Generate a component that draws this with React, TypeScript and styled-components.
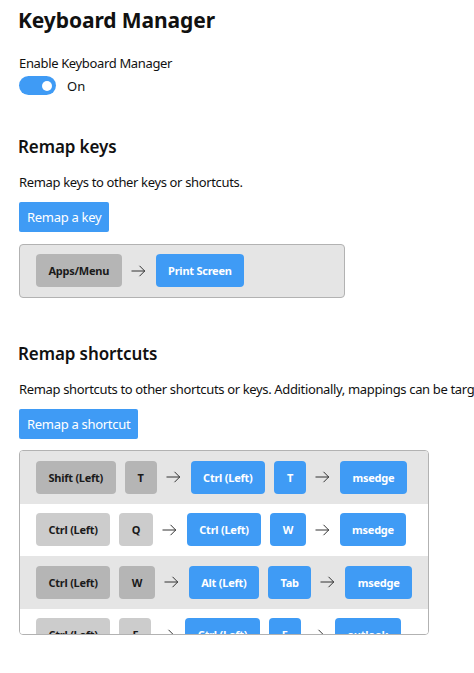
import React from 'react';
import styled, { createGlobalStyle } from 'styled-components';

const GlobalStyle = createGlobalStyle`
  html, body {
    margin: 0;
    padding: 0;
    background: #ffffff;
  }
  body {
    font-family: "Noto Sans", "Open Sans", Arial, sans-serif;
    color: #111111;
    overflow: hidden;
  }
`;

const Page = styled.div`
  width: 474px;
  height: 673px;
  padding: 0 0 0 19px;
  box-sizing: border-box;
  overflow: hidden;
  display: flex;
  flex-direction: column;
  align-items: flex-start;
`;

const Title = styled.h1`
  margin: 5px 0 0 -1px;
  font-size: 21px;
  line-height: 30px;
  font-weight: 700;
  letter-spacing: -0.1px;
`;

const Label = styled.div`
  margin-top: 19px;
  font-size: 13px;
  line-height: 18px;
  letter-spacing: -0.35px;
`;

const ToggleRow = styled.div`
  display: flex;
  align-items: center;
  gap: 11px;
  margin-top: 4px;
  font-size: 13px;
`;

const Toggle = styled.div`
  position: relative;
  width: 37px;
  height: 19px;
  border-radius: 10px;
  background: #3f9bf5;

  &::after {
    content: '';
    position: absolute;
    top: 4.5px;
    right: 4.5px;
    width: 10px;
    height: 10px;
    border-radius: 50%;
    background: #ffffff;
  }
`;

const Heading = styled.h2<{ $top: number }>`
  margin: ${p => p.$top}px 0 0 -1px;
  font-size: 17px;
  line-height: 26px;
  font-weight: 600;
  letter-spacing: -0.1px;
`;

const Description = styled.p`
  margin: 13px 0 0;
  font-size: 13px;
  line-height: 18px;
  letter-spacing: -0.35px;
  white-space: nowrap;
`;

const ActionButton = styled.button`
  margin-top: 11px;
  height: 30px;
  padding: 0 8px;
  border: none;
  border-radius: 2px;
  background: #3f9bf5;
  color: #ffffff;
  font-family: inherit;
  font-size: 13px;
  letter-spacing: -0.3px;
`;

const Box = styled.div<{ $height?: number }>`
  margin-top: 11px;
  width: 410px;
  box-sizing: border-box;
  border: 1.5px solid #b2b2b2;
  border-radius: 4px;
  overflow: hidden;
  ${p => (p.$height ? `height: ${p.$height}px;` : '')}
`;

const Row = styled.div<{ $shade: boolean }>`
  display: flex;
  align-items: center;
  gap: 9px;
  height: 52.5px;
  padding: 0 16px;
  background: ${p => (p.$shade ? '#e5e5e5' : '#ffffff')};
`;

const Key = styled.div<{ $target?: boolean; $shade?: boolean }>`
  display: flex;
  align-items: center;
  justify-content: center;
  height: 33px;
  min-width: 32px;
  padding: 0 12.5px;
  box-sizing: border-box;
  border-radius: 4px;
  font-size: 11px;
  font-weight: 700;
  letter-spacing: -0.25px;
  white-space: nowrap;
  color: ${p => (p.$target ? '#ffffff' : '#1a1a1a')};
  background: ${p => (p.$target ? '#3f9bf5' : p.$shade ? '#b5b5b5' : '#cccccc')};
`;

const ArrowBox = styled.svg`
  flex: none;
  width: 15px;
  height: 12px;
  margin: 0 1px 0 0;
`;

const Arrow = () => (
  <ArrowBox viewBox="0 0 15 12">
    <path d="M0.5 6h13.5M8.5 0.8l5.2 5.2-5.2 5.2" fill="none" stroke="#333" strokeWidth="1" />
  </ArrowBox>
);

const SingleBox = styled(Box)`
  width: 326px;
  height: 54px;
  margin-top: 12px;
  background: #e5e5e5;
`;

const SingleRow = styled.div`
  display: flex;
  align-items: center;
  gap: 9px;
  height: 51px;
  padding: 0 16px;
`;

type Mapping = { from: string[]; to: string[]; app: string };

const mappings: Mapping[] = [
  { from: ['Shift (Left)', 'T'], to: ['Ctrl (Left)', 'T'], app: 'msedge' },
  { from: ['Ctrl (Left)', 'Q'], to: ['Ctrl (Left)', 'W'], app: 'msedge' },
  { from: ['Ctrl (Left)', 'W'], to: ['Alt (Left)', 'Tab'], app: 'msedge' },
  { from: ['Ctrl (Left)', 'F'], to: ['Ctrl (Left)', 'F'], app: 'outlook' },
];

export default function App() {
  return (
    <>
      <GlobalStyle />
      <Page>
        <Title>Keyboard Manager</Title>
        <Label>Enable Keyboard Manager</Label>
        <ToggleRow>
          <Toggle />
          <span>On</span>
        </ToggleRow>

        <Heading $top={39}>Remap keys</Heading>
        <Description>Remap keys to other keys or shortcuts.</Description>
        <ActionButton>Remap a key</ActionButton>
        <SingleBox>
          <SingleRow>
            <Key $shade>Apps/Menu</Key>
            <Arrow />
            <Key $target>Print Screen</Key>
          </SingleRow>
        </SingleBox>

        <Heading $top={43}>Remap shortcuts</Heading>
        <Description>
          Remap shortcuts to other shortcuts or keys. Additionally, mappings can be targeted to specific applications.
        </Description>
        <ActionButton>Remap a shortcut</ActionButton>
        <Box $height={185}>
          {mappings.map((m, i) => {
            const shade = i % 2 === 0;
            return (
              <Row key={i} $shade={shade}>
                {m.from.map(k => (
                  <Key key={k} $shade={shade}>{k}</Key>
                ))}
                <Arrow />
                {m.to.map(k => (
                  <Key key={k} $target>{k}</Key>
                ))}
                <Arrow />
                <Key $target>{m.app}</Key>
              </Row>
            );
          })}
        </Box>
      </Page>
    </>
  );
}
